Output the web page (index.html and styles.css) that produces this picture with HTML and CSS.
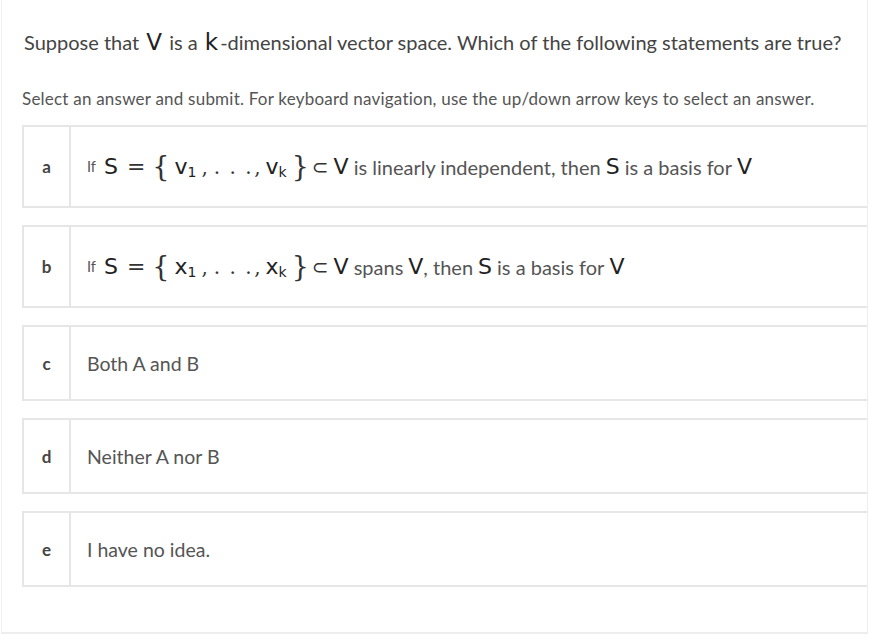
FILE: index.html
```html
<!DOCTYPE html>
<html lang="en">
<head>
    <meta charset="UTF-8">
    <meta name="viewport" content="width=device-width, initial-scale=1.0">
    <title>Question</title>
    <link rel="stylesheet" href="styles.css">
</head>
<body>
    <div class="question-box">
        <h1 class="prompt">Suppose that <span class="m big">V</span> is a <span class="m big">k</span>-dimensional vector space. Which of the following statements are true?</h1>

        <p class="hint">Select an answer and submit. For keyboard navigation, use the up/down arrow keys to select an answer.</p>

        <div class="choices">
            <div class="choice tall">
                <div class="letter">a</div>
                <div class="answer"><span class="small">If</span><span class="m">S</span><span class="op eq">=</span><span class="op brace">{</span><span class="m">v<sub>1</sub></span><span class="op">,</span><span class="dots">. . .</span><span class="op">,</span><span class="m">v<sub>k</sub></span><span class="op brace">}</span><span class="op sub-set">⊂</span><span class="m">V</span>is linearly independent, then<span class="m">S</span>is a basis for<span class="m">V</span></div>
            </div>
            <div class="choice tall">
                <div class="letter">b</div>
                <div class="answer"><span class="small">If</span><span class="m">S</span><span class="op eq">=</span><span class="op brace">{</span><span class="m">x<sub>1</sub></span><span class="op">,</span><span class="dots">. . .</span><span class="op">,</span><span class="m">x<sub>k</sub></span><span class="op brace">}</span><span class="op sub-set">⊂</span><span class="m">V</span>spans<span class="m tight">V</span>, then<span class="m">S</span>is a basis for<span class="m">V</span></div>
            </div>
            <div class="choice">
                <div class="letter">c</div>
                <div class="answer">Both A and B</div>
            </div>
            <div class="choice">
                <div class="letter">d</div>
                <div class="answer">Neither A nor B</div>
            </div>
            <div class="choice">
                <div class="letter">e</div>
                <div class="answer">I have no idea.</div>
            </div>
        </div>
    </div>
</body>
</html>
```

FILE: styles.css
```css
body {
    font-family: Lato, "Open Sans", sans-serif;
    margin: 0;
    background-color: #fff;
    color: #555;
}

.question-box {
    margin: 0 1px 0 1px;
    height: 634px;
    box-sizing: border-box;
    border-left: 1px solid #eee;
    border-right: 1px solid #eee;
    border-bottom: 2px solid #eee;
    padding: 27px 0 0 20px;
}

.prompt {
    font-size: 20px;
    font-weight: normal;
    color: #444;
    margin: 0 0 0 2px;
    line-height: 30px;
}

.hint {
    font-size: 17px;
    color: #555;
    margin: 31px 0 15px 0;
    line-height: 22px;
    letter-spacing: 0.22px;
}

.choices {
    display: flex;
    flex-direction: column;
    gap: 17px;
}

.choice {
    display: flex;
    height: 76px;
    border: 2px solid #e6e6e6;
    border-right: none;
    box-sizing: border-box;
}

.choice.tall {
    height: 83px;
}

.letter {
    width: 45px;
    border-right: 2px solid #e6e6e6;
    display: flex;
    align-items: center;
    justify-content: center;
    font-size: 17px;
    font-weight: bold;
    color: #444;
}

.answer {
    display: flex;
    align-items: center;
    padding-left: 16px;
    font-size: 19.5px;
    color: #555;
    white-space: pre;
}

.choice.tall .answer {
    font-size: 20px;
}

.small {
    font-size: 14.5px;
    margin-right: 3px;
}

.m {
    font-family: "DejaVu Sans", sans-serif;
    font-size: 22px;
    color: #222;
    margin: 0 5px;
}

.m.tight {
    margin-right: 0;
}

.m sub {
    font-size: 14px;
    vertical-align: -3px;
    line-height: 0;
}

.m.big {
    font-size: 23px;
    margin: 0 2px;
}

.op {
    font-family: "DejaVu Serif", serif;
    font-size: 20px;
    color: #333;
}

.op.eq {
    margin: 0 7px 0 4px;
    font-family: "DejaVu Sans", sans-serif;
    font-size: 22px;
}

.op.brace {
    font-size: 27px;
    font-weight: 300;
}

.op.sub-set {
    margin: 0 0 0 3px;
    font-family: "DejaVu Sans", sans-serif;
}

.dots {
    font-family: "DejaVu Serif", serif;
    font-size: 20px;
    color: #333;
    margin: 0 1px 0 6px;
    letter-spacing: 1.5px;
}
```
